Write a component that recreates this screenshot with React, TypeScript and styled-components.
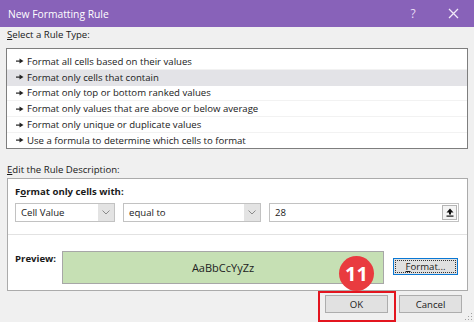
import React from "react";
import styled, { createGlobalStyle } from "styled-components";

const Global = createGlobalStyle`
  html, body { margin: 0; padding: 0; background: #f0f0f0; }
  body { font-family: "Open Sans", "Noto Sans", sans-serif; }
  * { box-sizing: border-box; }
`;

const Window = styled.div`
  position: relative;
  width: 474px;
  height: 322px;
  overflow: hidden;
  background: #f0f0f0;
  display: flex;
  flex-direction: column;
  font-size: 9.6px;
  color: #1a1a1a;
`;

const TitleBar = styled.div`
  height: 27px;
  flex: none;
  background: #8862b9;
  color: #fff;
  display: flex;
  align-items: center;
  padding: 0 15px 0 8px;
  font-size: 10.3px;
`;

const Title = styled.div`
  flex: 1 1 auto;
`;

const HelpButton = styled.div`
  flex: none;
  width: 10px;
  margin-right: 30px;
  text-align: center;
  font-size: 12px;
  color: #e9def5;
`;

const CloseButton = styled.div`
  flex: none;
  width: 11px;
  height: 11px;
  display: flex;
`;

const CloseIcon = () => (
  <svg width="11" height="11" viewBox="0 0 11 11">
    <path d="M1 1 L10 10 M10 1 L1 10" stroke="#f1eaf8" strokeWidth="1.3" />
  </svg>
);

const Body = styled.div`
  display: flex;
  flex-direction: column;
  padding: 0 6px 0 6px;
`;

const SectionLabel = styled.div<{ $top: number }>`
  margin-top: ${(p) => p.$top}px;
  height: 14px;
  line-height: 14px;
  padding-left: 1px;
`;

const U = styled.span`
  text-decoration: underline;
  text-underline-offset: 1px;
`;

const ListBox = styled.div`
  margin-top: 6px;
  height: 101px;
  border: 1px solid #7e7e7e;
  background: #fff;
  padding-top: 5px;
  overflow: hidden;
`;

const ListRow = styled.div<{ $selected?: boolean }>`
  height: 15.8px;
  display: flex;
  align-items: center;
  padding-left: 9px;
  gap: 3px;
  background: ${(p) => (p.$selected ? "#e3e3e7" : "transparent")};
  border-bottom: 1px solid ${(p) => (p.$selected ? "#e3e3e7" : "#f2f2f2")};
`;

const Arrow = () => (
  <svg width="8" height="6" viewBox="0 0 8 6">
    <rect x="0" y="2.5" width="4" height="1.2" fill="#222" />
    <path d="M3.5 0.5 L7.5 3 L3.5 5.5 Z" fill="#222" />
  </svg>
);

const DescBox = styled.div`
  margin-top: 1px;
  margin-left: 1px;
  height: 113px;
  border: 1px solid #ababab;
  background: #fff;
  display: flex;
  flex-direction: column;
`;

const DescTop = styled.div`
  padding: 6px 8px 0 7px;
  height: 56px;
  border-bottom: 1px solid #e2e2e2;
`;

const Bold = styled.div`
  font-weight: 700;
  height: 14px;
  line-height: 14px;
`;

const ControlRow = styled.div`
  display: flex;
  gap: 8px;
  margin-top: 4px;
`;

const Select = styled.div<{ $w: number }>`
  width: ${(p) => p.$w}px;
  height: 19px;
  border: 1px solid #c2c2c2;
  background: #fff;
  display: flex;
  align-items: center;
`;

const SelectText = styled.div`
  flex: 1;
  padding-left: 5px;
`;

const SelectBtn = styled.div`
  width: 16px;
  height: 17px;
  background: #e3e3e3;
  display: flex;
  align-items: center;
  justify-content: center;
`;

const Chevron = () => (
  <svg width="8" height="5" viewBox="0 0 8 5">
    <path d="M0.5 0.5 L4 4 L7.5 0.5" stroke="#8a8a8a" strokeWidth="1" fill="none" />
  </svg>
);

const TextInput = styled.div`
  flex: 1;
  height: 19px;
  border: 1px solid #c2c2c2;
  background: #fff;
  display: flex;
  align-items: center;
  padding-left: 5px;
  padding-right: 1px;
`;

const InputText = styled.div`
  flex: 1;
`;

const RefBtn = styled.div`
  width: 15px;
  height: 15px;
  border: 1px solid #b5b5b5;
  background: #f4f4f4;
  display: flex;
  align-items: center;
  justify-content: center;
`;

const UpIcon = () => (
  <svg width="8" height="9" viewBox="0 0 8 9">
    <path d="M4 0.5 L7.5 4.5 L5 4.5 L5 6.5 L3 6.5 L3 4.5 L0.5 4.5 Z" fill="#111" />
    <rect x="0.5" y="7.5" width="7" height="1.2" fill="#111" />
  </svg>
);

const PreviewRow = styled.div`
  display: flex;
  align-items: flex-start;
  padding: 16px 8px 0 7px;
`;

const PreviewLabel = styled.div`
  width: 47px;
  font-weight: 700;
  line-height: 14px;
  margin-top: 1px;
`;

const PreviewBox = styled.div`
  width: 322px;
  height: 33px;
  border: 1px solid #a7a7a7;
  background: #c6e0b4;
  display: flex;
  align-items: center;
  justify-content: center;
  font-size: 11px;
  color: #222;
`;

const FormatBtn = styled.div`
  margin-left: 9px;
  margin-top: 7px;
  width: 65px;
  height: 17px;
  border: 1px solid #0a78d4;
  background: #e1e1e1;
  padding: 1px;
  display: flex;
`;

const FocusInner = styled.div`
  flex: 1;
  border: 1px dotted #333;
  display: flex;
  align-items: center;
  justify-content: center;
`;

const ButtonRow = styled.div`
  display: flex;
  justify-content: flex-end;
  gap: 11px;
  padding: 4px 6px 0 0;
`;

const Button = styled.div`
  width: 63px;
  height: 18px;
  border: 1px solid #adadad;
  background: #e1e1e1;
  display: flex;
  align-items: center;
  justify-content: center;
`;

const Highlight = styled.div`
  position: absolute;
  left: 318px;
  top: 291px;
  width: 78px;
  height: 31px;
  border: 2px solid #e3151f;
`;

const Badge = styled.div`
  position: absolute;
  left: 339px;
  top: 256px;
  width: 35px;
  height: 35px;
  border-radius: 50%;
  background: #e93b3f;
  color: #fff;
  font-family: "Open Sans", sans-serif;
  font-weight: 700;
  font-size: 20px;
  display: flex;
  align-items: center;
  justify-content: center;
`;

const Grip = styled.div`
  position: absolute;
  right: 2px;
  bottom: 2px;
  width: 8px;
  height: 8px;
  background-image: radial-gradient(circle, #a0a0a0 0.8px, transparent 1px);
  background-size: 3px 3px;
  clip-path: polygon(100% 0, 100% 100%, 0 100%);
`;

const rules = [
  "Format all cells based on their values",
  "Format only cells that contain",
  "Format only top or bottom ranked values",
  "Format only values that are above or below average",
  "Format only unique or duplicate values",
  "Use a formula to determine which cells to format",
];

export default function App() {
  return (
    <>
      <Global />
      <Window>
        <TitleBar>
          <Title>New Formatting Rule</Title>
          <HelpButton>?</HelpButton>
          <CloseButton>
            <CloseIcon />
          </CloseButton>
        </TitleBar>
        <Body>
          <SectionLabel $top={1}>
            <U>S</U>elect a Rule Type:
          </SectionLabel>
          <ListBox>
            {rules.map((r, i) => (
              <ListRow key={r} $selected={i === 1}>
                <Arrow />
                <span>{r}</span>
              </ListRow>
            ))}
          </ListBox>
          <SectionLabel $top={14}>
            <U>E</U>dit the Rule Description:
          </SectionLabel>
          <DescBox>
            <DescTop>
              <Bold>
                F<U>o</U>rmat only cells with:
              </Bold>
              <ControlRow>
                <Select $w={100}>
                  <SelectText>Cell Value</SelectText>
                  <SelectBtn>
                    <Chevron />
                  </SelectBtn>
                </Select>
                <Select $w={138}>
                  <SelectText>equal to</SelectText>
                  <SelectBtn>
                    <Chevron />
                  </SelectBtn>
                </Select>
                <TextInput>
                  <InputText>28</InputText>
                  <RefBtn>
                    <UpIcon />
                  </RefBtn>
                </TextInput>
              </ControlRow>
            </DescTop>
            <PreviewRow>
              <PreviewLabel>Preview:</PreviewLabel>
              <PreviewBox>AaBbCcYyZz</PreviewBox>
              <FormatBtn>
                <FocusInner>
                  <U>F</U>ormat...
                </FocusInner>
              </FormatBtn>
            </PreviewRow>
          </DescBox>
          <ButtonRow>
            <Button>OK</Button>
            <Button>Cancel</Button>
          </ButtonRow>
        </Body>
        <Highlight />
        <Badge>11</Badge>
        <Grip />
      </Window>
    </>
  );
}
